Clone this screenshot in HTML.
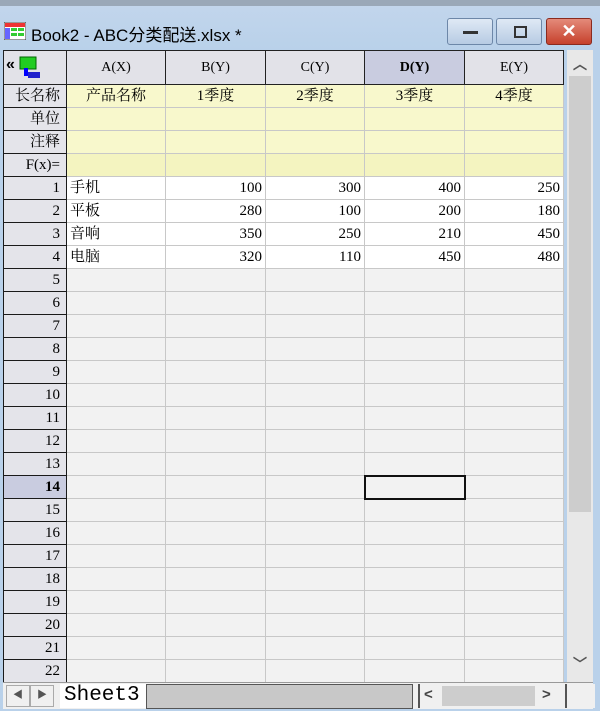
<!DOCTYPE html><html><head><meta charset="utf-8"><style>
body{margin:0;width:600px;height:711px;overflow:hidden;background:#b9d1ea;font-family:"Liberation Serif","Noto Serif CJK SC",serif;position:relative}
.title{position:absolute;left:0;top:0;width:600px;height:50px;background:linear-gradient(#c3d6ec,#b9d1ea)}
.top{position:absolute;left:0;top:0;width:600px;height:6px;background:#9aa8b8}
.tt{position:absolute;left:31px;top:21px;font:17px "Liberation Sans","Noto Sans CJK SC",sans-serif;color:#000}
.btn{position:absolute;top:18px;width:46px;height:27px;border:1px solid #6d87a8;border-radius:3px;background:linear-gradient(#dfe9f5,#b7cbe3);box-sizing:border-box}
table{position:absolute;left:3px;top:50px;border-collapse:collapse;table-layout:fixed;font-size:15px}
td{border:1px solid #c8c8c8;height:22px;line-height:20px;padding:0 3px;white-space:nowrap;overflow:hidden;background:#f2f2f2;box-sizing:border-box}
tr{height:23px}
td.h,tr.y td.h,tr.w td.h{background:#e4e4ea;border:1px solid #1a1a1a;border-top-color:#999;text-align:right;padding-right:6px}
tr.hd{height:34px}
tr.hd td{height:34px;background:#e2e2e8;border:1px solid #222;text-align:center;font-size:14px}
tr.y td{background:#f8f8cc;text-align:center}
tr.w td{background:#fff;text-align:right}
tr.w td.l{text-align:left}
.vs{position:absolute;left:567px;top:50px;width:26px;height:632px;background:#e8e8e8}
</style></head><body>
<div class="title"></div><div class="top"></div>
<svg style="position:absolute;left:4px;top:22px" width="22" height="18"><rect x="0" y="0" width="22" height="18" fill="#fff" stroke="#333"/><g fill="#3c3"><rect x="7" y="6" width="6" height="3"/><rect x="14" y="6" width="6" height="3"/><rect x="7" y="11" width="6" height="3"/><rect x="14" y="11" width="6" height="3"/></g><g fill="#e33"><rect x="1" y="1" width="20" height="4"/></g><g fill="#66f"><rect x="1" y="6" width="5" height="11"/></g></svg>
<div class="tt">Book2 - ABC分类配送.xlsx *</div>
<div class="btn" style="left:447px"><div style="position:absolute;left:15px;top:12px;width:15px;height:3px;background:#333"></div></div>
<div class="btn" style="left:496px"><div style="position:absolute;left:17px;top:7px;width:9px;height:8px;border:2px solid #333"></div></div>
<div class="btn" style="left:546px;background:linear-gradient(#e48a7a,#c6412c);border-color:#8a2a1e;color:#fff;font:bold 18px 'Liberation Sans';text-align:center;line-height:25px">✕</div>
<table>
<colgroup><col style="width:63px"><col style="width:99px"><col style="width:100px"><col style="width:99px"><col style="width:100px"><col style="width:99px"></colgroup>
<tr class="hd"><td style="text-align:left;padding:0 2px"><span style="font:bold 16px 'Liberation Sans';vertical-align:top">«</span> <svg width="24" height="24" style="vertical-align:middle"><rect x="2" y="1" width="16" height="12" fill="#2c2" stroke="#060"/><rect x="6" y="12" width="4" height="8" fill="#00f"/><rect x="10" y="16" width="12" height="6" fill="#22c"/></svg></td><td>A(X)</td><td>B(Y)</td><td>C(Y)</td><td style="background:#c9cce0;font-weight:bold">D(Y)</td><td>E(Y)</td></tr>
<tr class="y"><td class="h">长名称</td><td>产品名称</td><td>1季度</td><td>2季度</td><td>3季度</td><td>4季度</td></tr>
<tr class="y"><td class="h">单位</td><td></td><td></td><td></td><td></td><td></td></tr>
<tr class="y"><td class="h">注释</td><td></td><td></td><td></td><td></td><td></td></tr>
<tr class="y"><td class="h">F(x)=</td><td style="background:#f4f4c0"></td><td style="background:#f4f4c0"></td><td style="background:#f4f4c0"></td><td style="background:#f4f4c0"></td><td style="background:#f4f4c0"></td></tr>
<tr class="w"><td class="h">1</td><td class="l">手机</td><td>100</td><td>300</td><td>400</td><td>250</td></tr>
<tr class="w"><td class="h">2</td><td class="l">平板</td><td>280</td><td>100</td><td>200</td><td>180</td></tr>
<tr class="w"><td class="h">3</td><td class="l">音响</td><td>350</td><td>250</td><td>210</td><td>450</td></tr>
<tr class="w"><td class="h">4</td><td class="l">电脑</td><td>320</td><td>110</td><td>450</td><td>480</td></tr>
<tr><td class="h">5</td><td></td><td></td><td></td><td></td><td></td></tr>
<tr><td class="h">6</td><td></td><td></td><td></td><td></td><td></td></tr>
<tr><td class="h">7</td><td></td><td></td><td></td><td></td><td></td></tr>
<tr><td class="h">8</td><td></td><td></td><td></td><td></td><td></td></tr>
<tr><td class="h">9</td><td></td><td></td><td></td><td></td><td></td></tr>
<tr><td class="h">10</td><td></td><td></td><td></td><td></td><td></td></tr>
<tr><td class="h">11</td><td></td><td></td><td></td><td></td><td></td></tr>
<tr><td class="h">12</td><td></td><td></td><td></td><td></td><td></td></tr>
<tr><td class="h">13</td><td></td><td></td><td></td><td></td><td></td></tr>
<tr><td class="h" style="background:#c9cce0;font-weight:bold">14</td><td></td><td></td><td></td><td style="border:2px solid #111"></td><td></td></tr>
<tr><td class="h">15</td><td></td><td></td><td></td><td></td><td></td></tr>
<tr><td class="h">16</td><td></td><td></td><td></td><td></td><td></td></tr>
<tr><td class="h">17</td><td></td><td></td><td></td><td></td><td></td></tr>
<tr><td class="h">18</td><td></td><td></td><td></td><td></td><td></td></tr>
<tr><td class="h">19</td><td></td><td></td><td></td><td></td><td></td></tr>
<tr><td class="h">20</td><td></td><td></td><td></td><td></td><td></td></tr>
<tr><td class="h">21</td><td></td><td></td><td></td><td></td><td></td></tr>
<tr><td class="h">22</td><td></td><td></td><td></td><td></td><td></td></tr>
</table>
<div class="vs"><div style="position:absolute;left:2px;top:26px;width:22px;height:436px;background:#cdcdcd"></div>
<div style="position:absolute;left:0;top:4px;width:26px;text-align:center;font:bold 14px 'Liberation Sans';color:#555">︿</div>
<div style="position:absolute;left:0;top:604px;width:26px;text-align:center;font:bold 14px 'Liberation Sans';color:#555">﹀</div></div>
<div style="position:absolute;left:3px;top:682px;width:590px;height:26px;background:#f0f0f0;border-top:1px solid #999"></div>
<div style="position:absolute;left:6px;top:685px;width:22px;height:20px;border:1px solid #aaa;font-size:10px;text-align:center;line-height:20px;color:#555">◀</div>
<div style="position:absolute;left:30px;top:685px;width:22px;height:20px;border:1px solid #aaa;font-size:10px;text-align:center;line-height:20px;color:#555">▶</div>
<div style="position:absolute;left:60px;top:684px;width:86px;height:24px;background:#fff;font:21px 'Liberation Mono',monospace;line-height:24px;padding-left:4px">Sheet3</div>
<div style="position:absolute;left:146px;top:684px;width:265px;height:23px;background:#c8c8c8;border:1px solid #555"></div>
<div style="position:absolute;left:418px;top:684px;width:144px;height:24px;background:#f0f0f0;border-left:2px solid #555"></div>
<div style="position:absolute;left:442px;top:686px;width:93px;height:20px;background:#cdcdcd"></div>
<div style="position:absolute;left:424px;top:686px;font:bold 15px 'Liberation Sans';color:#444">&lt;</div>
<div style="position:absolute;left:542px;top:686px;font:bold 15px 'Liberation Sans';color:#444">&gt;</div>
<div style="position:absolute;left:565px;top:684px;width:28px;height:24px;border-left:2px solid #555;background:#f0f0f0"></div>
</body></html>
